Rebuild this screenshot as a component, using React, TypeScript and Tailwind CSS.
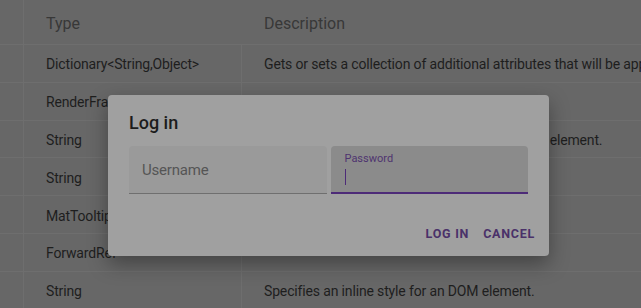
import React from "react";

const rows: { type: string; desc: string }[] = [
  { type: "Dictionary<String,Object>", desc: "Gets or sets a collection of additional attributes that will be applied to the created element." },
  { type: "RenderFragment", desc: "Child content of the component." },
  { type: "String", desc: "Specifies one or more classnames for an DOM element." },
  { type: "String", desc: "" },
  { type: "MatTooltip", desc: "" },
  { type: "ForwardRef", desc: "" },
  { type: "String", desc: "Specifies an inline style for an DOM element." },
];

const LoginDialog: React.FC = () => {
  return (
    <div className="absolute left-[108px] top-[95px] w-[441px] h-[161px] rounded-[4px] bg-[#a0a0a0] shadow-[0_8px_20px_rgba(0,0,0,0.35)] px-[21px] pt-[16px] flex flex-col">
      <h2 className="text-[18px] font-medium text-[#1c1c1c] leading-[24px]">Log in</h2>
      <div className="flex gap-[4px] mt-[11px]">
        <div className="w-[198px] h-[48px] bg-[#9a9a9a] rounded-t-[4px] border-b border-[#6f6f6f] flex items-center px-[13px] pt-[2px]">
          <span className="text-[15px] text-[#555555] tracking-[-0.2px]">Username</span>
        </div>
        <div className="w-[198px] h-[48px] bg-[#8b8b8b] rounded-t-[4px] border-b-2 border-[#4d2b78] flex flex-col px-[14px] pt-[6px]">
          <span className="text-[11px] leading-[14px] text-[#4f3470]">Password</span>
          <span className="mt-[3px] w-px h-[16px] bg-[#4d2b78]" />
        </div>
      </div>
      <div className="flex justify-end gap-[14px] mt-[31px] mr-[-7px]">
        <button className="text-[12.5px] font-bold tracking-[0.75px] text-[#4a3169]">LOG IN</button>
        <button className="text-[12.5px] font-bold tracking-[0.75px] text-[#4a3169]">CANCEL</button>
      </div>
    </div>
  );
};

export default function App() {
  return (
    <div className="relative w-[641px] h-[308px] overflow-hidden bg-[#676767] font-['Roboto',sans-serif]">
      <div className="grid grid-cols-[24px_218px_1fr] h-[45px] border-b border-[#6e6e6e] items-center text-[16px] text-[#383838]">
        <div className="h-full border-r border-[#6e6e6e]" />
        <div className="pl-[22px] pt-[3px]">Type</div>
        <div className="pl-[22px] pt-[3px]">Description</div>
      </div>
      {rows.map((r, i) => (
        <div
          key={i}
          className="grid grid-cols-[24px_218px_1fr] h-[37.8px] border-b border-[#6e6e6e] items-center text-[14px] tracking-[-0.15px] text-[#1e1e1e] whitespace-nowrap overflow-hidden"
        >
          <div className="h-full border-r border-[#6e6e6e]" />
          <div className="pl-[22px] pt-[3px] h-full flex items-center border-r border-[#6e6e6e]">{r.type}</div>
          <div className="pl-[22px] pt-[3px]">{r.desc}</div>
        </div>
      ))}
      <LoginDialog />
    </div>
  );
}
